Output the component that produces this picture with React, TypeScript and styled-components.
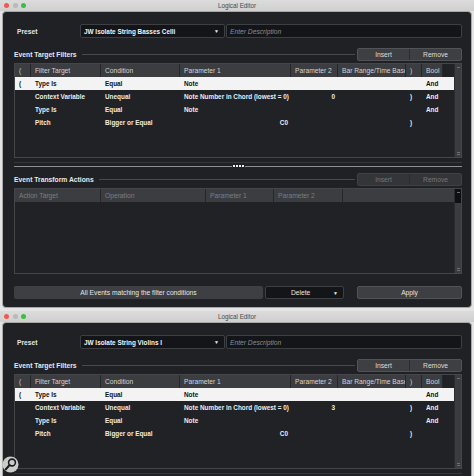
import styled, { createGlobalStyle } from "styled-components";

const GlobalStyle = createGlobalStyle`
  html, body {
    margin: 0;
    padding: 0;
    background: #d2d2d2;
  }
  * {
    box-sizing: border-box;
  }
`;

const Page = styled.div`
  width: 474px;
  height: 476px;
  overflow: hidden;
  position: relative;
  background: #d2d2d2;
  font-family: "Liberation Sans", Arial, sans-serif;
`;

const WindowFrame = styled.div`
  display: flex;
  flex-direction: column;
  padding-bottom: 3px;
  background: #e4e4e4;
`;

const TitleBar = styled.div`
  height: 11px;
  display: flex;
  align-items: center;
  justify-content: center;
  position: relative;
  background: linear-gradient(#dcdcdc, #cfcfcf);
  color: #4a4a4a;
  font-size: 6.3px;
`;

const Lights = styled.div`
  position: absolute;
  left: 4px;
  top: 3px;
  display: flex;
  gap: 3.5px;
`;

const Light = styled.span<{ $color: string }>`
  width: 5px;
  height: 5px;
  border-radius: 50%;
  background: ${(p) => p.$color};
`;

const Body = styled.div`
  margin: 0 2px;
  height: 297px;
  border: 1px solid #a9a9a9;
  border-radius: 4px;
  background: #1f2124;
  padding: 12px 9px 0 11px;
  display: flex;
  flex-direction: column;
`;

const PresetRow = styled.div`
  display: flex;
  align-items: center;
  height: 14px;
`;

const Label = styled.div`
  width: 66px;
  padding-left: 3px;
  color: #e6e6e6;
  font-size: 6.7px;
  font-weight: bold;
`;

const PresetSelect = styled.div`
  width: 145px;
  height: 14px;
  display: flex;
  align-items: center;
  justify-content: space-between;
  padding: 0 5px 0 3px;
  background: #141518;
  border: 1px solid #3d3f43;
  border-radius: 2px;
  color: #f2f2f2;
  font-size: 6.4px;
  font-weight: bold;
`;

const Caret = styled.span`
  font-size: 5px;
  color: #eaeaea;
`;

const Description = styled.div`
  flex: 1;
  height: 14px;
  margin-left: 1px;
  display: flex;
  align-items: center;
  padding-left: 3px;
  background: #141518;
  border: 1px solid #3d3f43;
  border-radius: 2px;
  color: #8b8d91;
  font-size: 6.7px;
  font-style: italic;
`;

const SectionRow = styled.div<{ $gap: number }>`
  display: flex;
  align-items: center;
  height: 13px;
  margin-top: ${(p) => p.$gap}px;
`;

const SectionTitle = styled.div`
  color: #e8e8e8;
  font-size: 6.75px;
  font-weight: bold;
  white-space: nowrap;
`;

const SectionLine = styled.div`
  flex: 1;
  height: 1px;
  margin: 0 2px 0 5px;
  background: #47494d;
`;

const ButtonGroup = styled.div<{ $disabled?: boolean }>`
  width: 105px;
  height: 13px;
  display: flex;
  border: 1px solid ${(p) => (p.$disabled ? "#3f4145" : "#505357")};
  border-radius: 2px;
  background: ${(p) => (p.$disabled ? "#333539" : "#3d3f43")};
  color: ${(p) => (p.$disabled ? "#74767a" : "#dedede")};
  font-size: 6.7px;
`;

const GroupButton = styled.div`
  flex: 1;
  display: flex;
  align-items: center;
  justify-content: center;
  & + & {
    border-left: 1px solid #2a2c2f;
  }
`;

const Table = styled.div<{ $height: number }>`
  height: ${(p) => p.$height}px;
  margin-top: 2px;
  display: flex;
  border: 1px solid #44464a;
  background: #202225;
`;

const Grid = styled.div`
  flex: 1;
  display: flex;
  flex-direction: column;
`;

const Row = styled.div<{ $cols: string; $selected?: boolean; $header?: boolean; $dim?: boolean }>`
  display: grid;
  grid-template-columns: ${(p) => p.$cols};
  height: 13px;
  line-height: 13px;
  background: ${(p) => (p.$header ? "#3b3d41" : p.$selected ? "#f3f3f3" : "transparent")};
  color: ${(p) =>
    p.$header ? (p.$dim ? "#7c7e82" : "#d4d4d4") : p.$selected ? "#111" : "#ececec"};
  font-size: ${(p) => (p.$header ? "6.7px" : "6.4px")};
  font-weight: ${(p) => (p.$header ? "normal" : "bold")};
`;

const Cell = styled.div<{ $right?: boolean; $divider?: boolean }>`
  padding: 0 3px 0 ${(p) => (p.$right ? 0 : 4)}px;
  text-align: ${(p) => (p.$right ? "right" : "left")};
  white-space: nowrap;
  overflow: hidden;
  border-right: ${(p) => (p.$divider ? "1px solid #25272a" : "none")};
`;

const Filler = styled.div<{ $dark?: boolean }>`
  background: ${(p) => (p.$dark ? "#202225" : "transparent")};
`;

const Scrollbar = styled.div<{ $dark?: boolean }>`
  width: 7px;
  display: flex;
  flex-direction: column;
  justify-content: space-between;
  align-items: center;
  padding: 3px 0 2px;
  background: ${(p) =>
    p.$dark ? "linear-gradient(#0e0f11 0 14px, #3a3c40 14px)" : "#3a3c40"};
  border-left: 1px solid #2a2c2f;
`;

const Tick = styled.span<{ $double?: boolean }>`
  width: 3px;
  height: ${(p) => (p.$double ? 3 : 1)}px;
  border-top: 1px solid #6c6e72;
  border-bottom: ${(p) => (p.$double ? "1px solid #6c6e72" : "none")};
`;

const Splitter = styled.div`
  height: 15px;
  display: flex;
  flex-direction: column;
  padding-top: 4px;
`;

const FaintLine = styled.div`
  height: 1px;
  background: #35373b;
`;

const BrightLine = styled.div`
  height: 1px;
  margin-top: 3px;
  background: #8d8f92;
  display: flex;
  justify-content: center;
  align-items: flex-end;
`;

const Dots = styled.div`
  display: flex;
  gap: 1px;
  padding: 0 1px;
  height: 2px;
  background: #1f2124;
`;

const Dot = styled.span`
  width: 2px;
  height: 2px;
  background: #f0f0f0;
`;

const Footer = styled.div`
  display: flex;
  height: 13px;
  margin-top: 12px;
  font-size: 6.7px;
  color: #e6e6e6;
`;

const FooterBar = styled.div`
  width: 249px;
  display: flex;
  align-items: center;
  justify-content: center;
  background: #3d3f43;
  border-radius: 2px;
`;

const DeleteSelect = styled.div`
  width: 79px;
  margin-left: 2px;
  display: flex;
  align-items: center;
  justify-content: space-between;
  padding: 0 5px 0 25px;
  background: #141518;
  border: 1px solid #3d3f43;
  border-radius: 2px;
`;

const ApplyButton = styled.div`
  width: 105px;
  margin-left: auto;
  display: flex;
  align-items: center;
  justify-content: center;
  background: #3d3f43;
  border: 1px solid #505357;
  border-radius: 2px;
`;

const Badge = styled.div`
  position: absolute;
  left: 2px;
  top: 456px;
  width: 17px;
  height: 17px;
`;

type FilterRow = {
  open?: string;
  target: string;
  cond: string;
  p1?: string;
  p1Right?: string;
  p2?: string;
  close?: string;
  bool?: string;
  selected?: boolean;
};

const filterCols = "16px 70px 79px 111px 47px 68px 16px 21px 1fr";
const actionCols = "86px 105px 68px 69px 1fr";

const filterRows = (p2: string): FilterRow[] => [
  { open: "(", target: "Type Is", cond: "Equal", p1: "Note", bool: "And", selected: true },
  {
    target: "Context Variable",
    cond: "Unequal",
    p1: "Note Number in Chord (lowest = 0)",
    p2,
    close: ")",
    bool: "And",
  },
  { target: "Type Is", cond: "Equal", p1: "Note", bool: "And" },
  { target: "Pitch", cond: "Bigger or Equal", p1Right: "C0", close: ")" },
];

const LogicalEditor = ({ preset, p2 }: { preset: string; p2: string }) => (
  <WindowFrame>
    <TitleBar>
      <Lights>
        <Light $color="#ee5a52" />
        <Light $color="#b9b9b9" />
        <Light $color="#35c142" />
      </Lights>
      Logical Editor
    </TitleBar>
    <Body>
      <PresetRow>
        <Label>Preset</Label>
        <PresetSelect>
          {preset}
          <Caret>▼</Caret>
        </PresetSelect>
        <Description>Enter Description</Description>
      </PresetRow>

      <SectionRow $gap={10}>
        <SectionTitle>Event Target Filters</SectionTitle>
        <SectionLine />
        <ButtonGroup>
          <GroupButton>Insert</GroupButton>
          <GroupButton>Remove</GroupButton>
        </ButtonGroup>
      </SectionRow>

      <Table $height={95}>
        <Grid>
          <Row $cols={filterCols} $header>
            <Cell $divider>(</Cell>
            <Cell $divider>Filter Target</Cell>
            <Cell $divider>Condition</Cell>
            <Cell $divider>Parameter 1</Cell>
            <Cell $divider>Parameter 2</Cell>
            <Cell $divider>Bar Range/Time Base</Cell>
            <Cell $divider>)</Cell>
            <Cell $divider>Bool</Cell>
            <Filler $dark />
          </Row>
          {filterRows(p2).map((r, i) => (
            <Row key={i} $cols={filterCols} $selected={r.selected}>
              <Cell>{r.open}</Cell>
              <Cell>{r.target}</Cell>
              <Cell>{r.cond}</Cell>
              {r.p1Right ? <Cell $right>{r.p1Right}</Cell> : <Cell>{r.p1}</Cell>}
              <Cell $right>{r.p2}</Cell>
              <Cell />
              <Cell>{r.close}</Cell>
              <Cell>{r.bool}</Cell>
              <Filler />
            </Row>
          ))}
        </Grid>
        <Scrollbar>
          <Tick />
          <Tick $double />
        </Scrollbar>
      </Table>

      <Splitter>
        <FaintLine />
        <BrightLine>
          <Dots>
            <Dot />
            <Dot />
            <Dot />
            <Dot />
          </Dots>
        </BrightLine>
      </Splitter>

      <SectionRow $gap={0}>
        <SectionTitle>Event Transform Actions</SectionTitle>
        <SectionLine />
        <ButtonGroup $disabled>
          <GroupButton>Insert</GroupButton>
          <GroupButton>Remove</GroupButton>
        </ButtonGroup>
      </SectionRow>

      <Table $height={86}>
        <Grid>
          <Row $cols={actionCols} $header $dim>
            <Cell $divider>Action Target</Cell>
            <Cell $divider>Operation</Cell>
            <Cell $divider>Parameter 1</Cell>
            <Cell $divider>Parameter 2</Cell>
            <Filler />
          </Row>
        </Grid>
        <Scrollbar $dark>
          <Tick />
          <Tick $double />
        </Scrollbar>
      </Table>

      <Footer>
        <FooterBar>All Events matching the filter conditions</FooterBar>
        <DeleteSelect>
          Delete
          <Caret>▼</Caret>
        </DeleteSelect>
        <ApplyButton>Apply</ApplyButton>
      </Footer>
    </Body>
  </WindowFrame>
);

export default function App() {
  return (
    <Page>
      <GlobalStyle />
      <LogicalEditor preset="JW Isolate String Basses Celli" p2="0" />
      <LogicalEditor preset="JW Isolate String Violins I" p2="3" />
      <Badge>
        <svg width="17" height="17" viewBox="0 0 17 17">
          <circle cx="8.5" cy="8.5" r="8" fill="#e9e9e9" fillOpacity="0.85" />
          <circle cx="10" cy="6.5" r="3.4" fill="none" stroke="#1c1c1c" strokeWidth="1.6" />
          <line x1="7.6" y1="9" x2="3.6" y2="13.5" stroke="#1c1c1c" strokeWidth="2" strokeLinecap="round" />
        </svg>
      </Badge>
    </Page>
  );
}
